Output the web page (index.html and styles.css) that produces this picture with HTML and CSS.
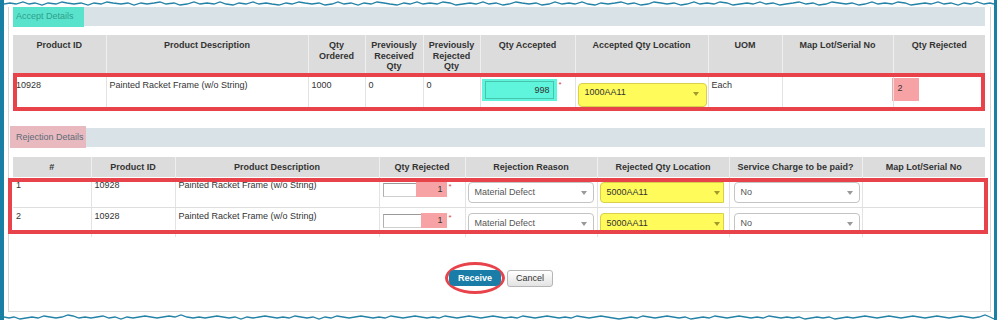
FILE: index.html
```html
<!DOCTYPE html>
<html lang="en">
<head>
    <meta charset="UTF-8">
    <title>Receive Goods</title>
    <link rel="stylesheet" href="styles.css">
</head>
<body>
<div class="sheet">
    <!-- torn top edge -->
    <svg class="tear" width="990" height="7" viewBox="0 0 990 7">
        <polyline points="0,4 6,3 12,4 19,2 25,4 31,3 38,5 44,3 52,4 58,2 63,3 70,4 77,3 84,5 90,3 97,4 103,2 109,3 117,4 124,3 130,5 137,3 143,4 150,3 156,2 162,4 170,3 176,5 183,4 190,2 196,4 203,3 210,4 216,2 222,4 229,5 235,3 242,4 249,2 255,4 262,3 268,4 275,5 282,3 288,4 295,2 301,3 308,4 315,3 321,5 328,4 334,2 340,4 347,3 354,5 360,3 367,4 373,2 380,3 386,4 393,5 400,3 406,4 413,2 419,4 426,3 433,4 439,2 446,3 452,5 459,4 466,3 472,4 479,2 485,4 492,3 499,5 505,4 512,2 518,3 525,4 532,3 538,5 545,4 551,2 558,4 565,3 571,4 578,2 584,4 591,5 597,3 604,4 611,3 617,2 624,4 630,3 637,5 644,4 650,2 657,3 663,4 670,3 677,5 683,4 690,2 696,4 703,3 710,4 716,2 723,3 729,5 736,4 743,3 749,4 756,2 762,4 769,3 776,5 782,4 789,3 795,2 802,4 809,3 815,5 822,4 828,2 835,3 842,4 848,3 855,5 861,4 868,2 874,4 881,3 888,4 894,2 901,3 907,5 914,4 921,3 927,4 934,2 940,4 947,3 954,5 960,3 967,4 973,2 980,4 986,3 990,4" />
    </svg>

    <div class="panel">
        <div class="section-bar">
            <span class="section-label accept-label">Accept Details</span>
        </div>

        <div class="annotated accept-wrap">
            <table class="grid accept">
                <colgroup>
                    <col style="width:93px"><col style="width:202px"><col style="width:57px"><col style="width:58px"><col style="width:57px">
                    <col style="width:95px"><col style="width:133px"><col style="width:74px"><col style="width:111px"><col style="width:92px">
                </colgroup>
                <thead>
                <tr>
                    <th>Product ID</th>
                    <th>Product Description</th>
                    <th>Qty Ordered</th>
                    <th>Previously Received Qty</th>
                    <th>Previously Rejected Qty</th>
                    <th>Qty Accepted</th>
                    <th>Accepted Qty Location</th>
                    <th>UOM</th>
                    <th>Map Lot/Serial No</th>
                    <th>Qty Rejected</th>
                </tr>
                </thead>
                <tbody>
                <tr>
                    <td>10928</td>
                    <td>Painted Racket Frame (w/o String)</td>
                    <td>1000</td>
                    <td>0</td>
                    <td>0</td>
                    <td class="ctl">
                        <div class="field">
                            <div class="teal-hl"><div class="num">998</div></div>
                            <span class="req">*</span>
                        </div>
                    </td>
                    <td class="ctl">
                        <div class="select yellow loc-accept">1000AA11<span class="caret"></span></div>
                    </td>
                    <td>Each</td>
                    <td></td>
                    <td class="ctl"><div class="pink-val">2</div></td>
                </tr>
                </tbody>
            </table>
            <div class="red-box accept-box"></div>
        </div>

        <div class="section-bar reject-bar">
            <span class="section-label reject-label">Rejection Details</span>
        </div>

        <div class="annotated reject-wrap">
            <table class="grid reject">
                <colgroup>
                    <col style="width:78px"><col style="width:84px"><col style="width:204px"><col style="width:86px">
                    <col style="width:132px"><col style="width:132px"><col style="width:133px"><col style="width:123px">
                </colgroup>
                <thead>
                <tr>
                    <th>#</th>
                    <th>Product ID</th>
                    <th>Product Description</th>
                    <th>Qty Rejected</th>
                    <th>Rejection Reason</th>
                    <th>Rejected Qty Location</th>
                    <th>Service Charge to be paid?</th>
                    <th>Map Lot/Serial No</th>
                </tr>
                </thead>
                <tbody>
                <tr>
                    <td>1</td>
                    <td>10928</td>
                    <td>Painted Racket Frame (w/o String)</td>
                    <td class="ctl">
                        <div class="field">
                            <div class="qty-box"><span class="qty-hl">1</span></div>
                            <span class="req small">*</span>
                        </div>
                    </td>
                    <td class="ctl"><div class="select plain reason">Material Defect<span class="caret"></span></div></td>
                    <td class="ctl"><div class="select yellow loc-reject">5000AA11<span class="caret"></span></div></td>
                    <td class="ctl"><div class="select plain charge">No<span class="caret"></span></div></td>
                    <td></td>
                </tr>
                <tr>
                    <td>2</td>
                    <td>10928</td>
                    <td>Painted Racket Frame (w/o String)</td>
                    <td class="ctl">
                        <div class="field">
                            <div class="qty-box second"><span class="qty-hl">1</span></div>
                            <span class="req small">*</span>
                        </div>
                    </td>
                    <td class="ctl"><div class="select plain reason">Material Defect<span class="caret"></span></div></td>
                    <td class="ctl"><div class="select yellow loc-reject">5000AA11<span class="caret"></span></div></td>
                    <td class="ctl"><div class="select plain charge">No<span class="caret"></span></div></td>
                    <td></td>
                </tr>
                </tbody>
            </table>
            <div class="red-box reject-box"></div>
        </div>

        <!-- Butonlar -->
        <div class="actions">
            <span class="ring"><button class="btn-receive">Receive</button></span>
            <button class="btn-cancel">Cancel</button>
        </div>
    </div>

    <!-- torn bottom edge -->
    <svg class="tear" width="990" height="8" viewBox="0 0 990 8">
        <polyline points="0,5 5,6 10,5 16,7 22,6 28,5 34,6 40,4 46,5 52,6 58,5 64,3 69,4 75,6 81,5 87,6 93,5 99,4 105,6 111,5 117,7 123,5 129,6 135,5 141,4 147,5 153,6 159,5 165,4 171,5 177,3 183,5 189,6 195,5 201,6 207,5 213,4 219,5 225,6 231,5 237,7 243,5 249,6 255,5 261,4 267,5 273,6 279,5 285,6 291,4 297,5 303,6 309,5 315,7 321,5 327,6 333,4 339,5 345,6 351,5 357,4 363,5 369,6 375,5 381,6 387,4 393,5 399,6 405,5 411,4 417,5 423,6 429,5 435,6 441,4 447,5 453,6 459,5 465,4 471,5 477,6 483,5 489,4 495,5 501,6 507,5 513,6 519,4 525,5 531,6 537,5 543,4 549,5 555,6 561,5 567,6 573,4 579,5 585,6 591,5 597,4 603,5 609,6 615,7 621,6 627,5 633,6 639,4 645,5 651,6 657,5 663,4 669,5 675,6 681,5 687,7 693,6 699,5 705,6 711,4 717,5 723,6 729,5 735,4 741,5 747,6 753,5 759,6 765,4 771,5 777,6 783,5 789,6 795,5 801,7 807,6 813,5 819,6 825,5 831,7 837,6 843,5 849,6 855,5 861,4 867,5 873,6 879,5 885,4 891,5 897,6 903,5 909,4 915,5 921,6 927,5 933,4 939,5 945,6 951,5 957,4 963,5 969,6 975,5 981,3 986,5 990,7" />
    </svg>
</div>
</body>
</html>
```

FILE: styles.css
```css
body {
    margin: 0;
    background-color: #fff;
    font-family: "Liberation Sans", Arial, sans-serif;
    font-size: 9px;
    color: #333;
}
.sheet {
    width: 990px;
    border-left: 4px solid #1a7fa5;
    border-right: 3px solid #1a7fa5;
}
.tear {
    display: block;
}
.tear polyline {
    fill: none;
    stroke: #2582a7;
    stroke-width: 1.3;
}
.panel {
    margin: 0 3px 0 4px;
    border: 1px solid #d6d6d6;
    border-top: none;
    padding: 0 5px 17px 4px;
}

/* section titles */
.section-bar {
    display: flex;
    height: 19px;
    background-color: #d9e3e7;
}
.section-label {
    box-sizing: border-box;
    white-space: nowrap;
}
.accept-label {
    width: 71px;
    height: 20px;
    line-height: 18px;
    padding-left: 3px;
    background-color: #5ae3cc;
    color: #2e9f8c;
}
.reject-bar {
    margin-top: 17px;
}
.reject-label {
    width: 76px;
    height: 22px;
    margin: -2px 0 0 -3px;
    line-height: 22px;
    padding-left: 6px;
    background-color: #e8babf;
    color: #5c6a78;
}

/* tables */
.annotated {
    position: relative;
}
.accept-wrap {
    margin-top: 9px;
}
.reject-wrap {
    margin-top: 10px;
}
.grid {
    width: 972px;
    table-layout: fixed;
    border-collapse: collapse;
    border-spacing: 0;
}
.grid th {
    background-color: #dcdcdc;
    font-weight: bold;
    text-align: center;
    line-height: 10.5px;
    padding: 5px 4px 0;
    border-left: 1px solid #efefef;
}
.grid td {
    vertical-align: top;
    text-align: left;
    line-height: 10.5px;
    padding: 7px 3px 0;
    border-left: 1px solid #e3e3e3;
}
.grid th:first-child,
.grid td:first-child {
    border-left: none;
}
.grid td.ctl {
    padding: 0;
}
.accept thead tr {
    height: 38px;
}
.accept th {
    vertical-align: top;
}
.accept tbody tr {
    height: 38px;
}
.reject thead tr {
    height: 20px;
}
.reject th {
    vertical-align: middle;
    padding: 0 4px;
}
.reject tbody tr {
    height: 30px;
}
.reject td {
    padding-top: 3px;
}
.reject tbody tr:first-child td {
    border-bottom: 1px solid #dedede;
}

/* controls */
.field {
    display: flex;
    align-items: flex-start;
}
.teal-hl {
    margin: 6px 0 0 1px;
    padding: 2px 3px;
    background-color: #5ef5dc;
}
.num {
    box-sizing: border-box;
    width: 69px;
    height: 18px;
    border: 1px solid #47c4ad;
    text-align: right;
    line-height: 16px;
    padding-right: 3px;
}
.req {
    margin: 8px 0 0 2px;
    color: #e24046;
    font-size: 8px;
    line-height: 8px;
}
.req.small {
    margin: 6px 0 0 3px;
}
.select {
    position: relative;
    box-sizing: border-box;
    border-radius: 4px;
    white-space: nowrap;
}
.select .caret {
    position: absolute;
    right: 6px;
    top: 8px;
    width: 0;
    height: 0;
    border-left: 3px solid transparent;
    border-right: 3px solid transparent;
    border-top: 4px solid #999;
}
.yellow {
    background-color: #fffb5a;
    border: 1px solid #d8d04c;
    color: #333;
}
.yellow .caret {
    border-top-color: #a09a2c;
}
.plain {
    background-color: #fff;
    border: 1px solid #c4c4c4;
    color: #555;
}
.loc-accept {
    width: 129px;
    height: 24px;
    margin: 10px 0 0 2px;
    padding: 2px 0 0 6px;
    line-height: 13px;
}
.loc-accept .caret {
    top: 8px;
    right: 7px;
}
.reason,
.loc-reject,
.charge {
    height: 21px;
    margin-top: 5px;
    line-height: 19px;
    padding-left: 6px;
}
.reason {
    width: 126px;
    margin-left: 2px;
}
.loc-reject {
    width: 124px;
    margin-left: 2px;
    border-top-right-radius: 0;
    border-bottom-right-radius: 0;
}
.loc-reject .caret {
    right: 3px;
}
.charge {
    width: 126px;
    margin-left: 4px;
}
.pink-val {
    box-sizing: border-box;
    width: 27px;
    height: 23px;
    margin: 5px 0 0 -2px;
    padding: 5px 0 0 6px;
    background-color: #f7a3a6;
}
.qty-box {
    box-sizing: border-box;
    display: flex;
    justify-content: flex-end;
    width: 63px;
    height: 14px;
    margin: 6px 0 0 3px;
    border: 1px solid #cfcfcf;
    border-top-color: #9a9a9a;
    border-left-color: #b0b0b0;
    background-color: #fff;
}
.qty-hl {
    box-sizing: border-box;
    width: 31px;
    margin: -3px -2px -1px 0;
    padding: 3px 4px 0 0;
    text-align: right;
    line-height: 11px;
    background-color: #f7a3a6;
}
.qty-box.second {
    margin-top: 6px;
}
.qty-box.second .qty-hl {
    width: 26px;
    margin-top: -2px;
    padding-top: 2px;
}

/* red annotation frames */
.red-box {
    position: absolute;
    box-sizing: border-box;
    border: 4px solid #e8434b;
}
.accept-box {
    left: 0;
    top: 38px;
    width: 972px;
    height: 38px;
}
.reject-box {
    left: -5px;
    top: 21px;
    width: 980px;
    height: 56px;
}

/* buttons */
.actions {
    display: flex;
    justify-content: center;
    align-items: center;
    gap: 2px;
    margin-top: 25px;
}
.ring {
    display: inline-flex;
    padding: 5px 1px;
    border: 3px solid #e8434b;
    border-radius: 50%;
}
button {
    font-family: "Liberation Sans", Arial, sans-serif;
    font-size: 9px;
    padding: 0;
    cursor: pointer;
}
.btn-receive {
    width: 52px;
    height: 16px;
    border: none;
    border-radius: 5px;
    background-color: #1a7da7;
    color: #fff;
    font-weight: bold;
}
.btn-cancel {
    width: 46px;
    height: 17px;
    border: 1px solid #b5b5b5;
    border-radius: 3px;
    background: linear-gradient(#ffffff, #e3e3e3);
    color: #333;
}
```
